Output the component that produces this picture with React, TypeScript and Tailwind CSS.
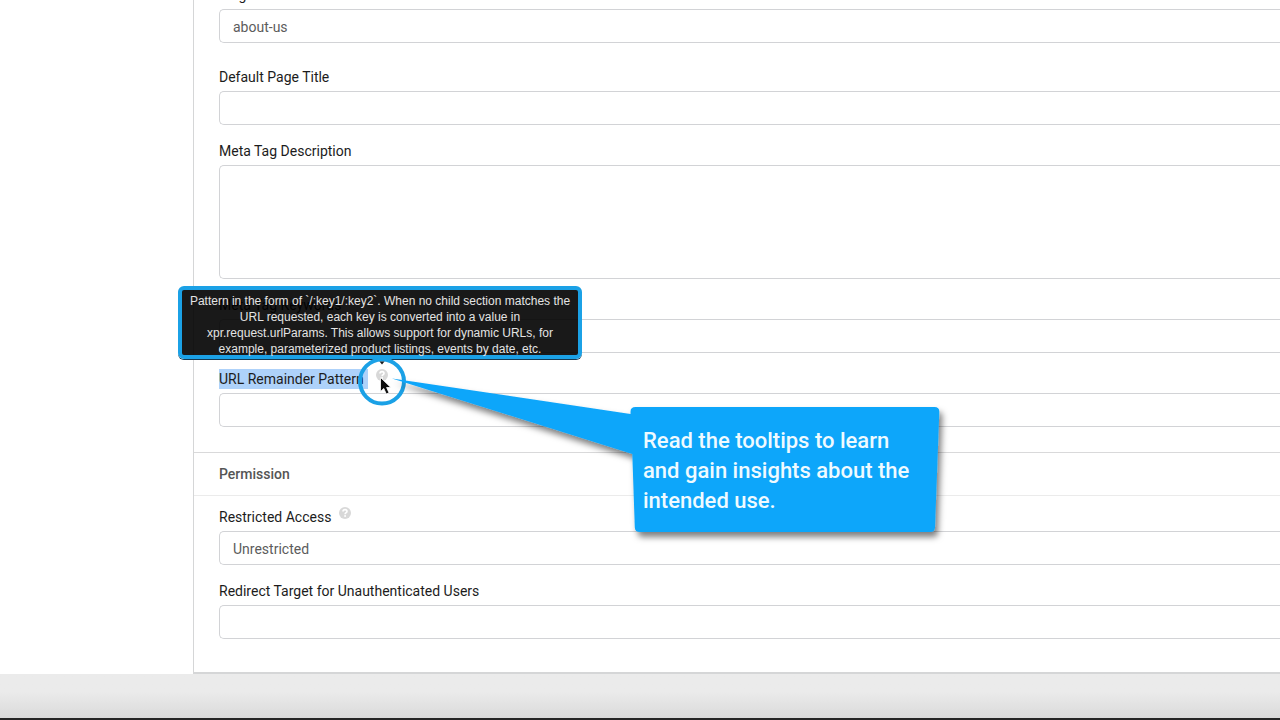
import { ReactNode } from "react";

const INPUT =
  "block w-full appearance-none rounded-l-[5px] border border-r-0 border-[#d2d3d6] bg-white px-[13px] text-sm text-[#5c5c5c] outline-none";

function HelpIcon() {
  return (
    <svg viewBox="0 0 12 12" className="ml-2 size-3" aria-hidden="true">
      <circle cx="6" cy="6" r="6" fill="#d8d8d8" />
      <path
        d="M4 4.6C4 3.3 4.9 2.6 6.05 2.6S8 3.3 8 4.4C8 5.6 6.1 5.6 6.1 7.2"
        fill="none"
        stroke="#fff"
        strokeWidth="1.6"
      />
      <circle cx="6.1" cy="9" r="0.95" fill="#fff" />
    </svg>
  );
}

interface FieldProps {
  id: string;
  label: string;
  help?: boolean;
  selected?: boolean;
  children: ReactNode;
}

function Field({ id, label, help, selected, children }: FieldProps) {
  return (
    <div>
      <div className="mb-1 flex h-5 items-start">
        <label
          htmlFor={id}
          className={`text-sm leading-5 text-[#1c1c1c] ${selected ? "bg-[#aed2fa] pr-1" : ""}`}
        >
          {label}
        </label>
        {help && <HelpIcon />}
      </div>
      {children}
    </div>
  );
}

function Tooltip() {
  return (
    <div
      role="tooltip"
      className="absolute left-[178px] top-[286px] h-[73px] w-[404px] rounded-md border-4 border-[#1ba1e6] bg-black/90 px-1 pt-[3px] text-center font-['Liberation_Sans',Arial,sans-serif] text-xs leading-4 text-[#e4e4e4] shadow-[0_1px_0_#163a52]"
    >
      Pattern in the form of `/:key1/:key2`. When no child section matches the
      <br />
      URL requested, each key is converted into a value in
      <br />
      xpr.request.urlParams. This allows support for dynamic URLs, for
      <br />
      example, parameterized product listings, events by date, etc.
    </div>
  );
}

function Callout() {
  return (
    <>
      {/* bubble, pointer, highlight ring and mouse cursor */}
      <svg
        viewBox="350 350 610 200"
        className="pointer-events-none absolute left-[350px] top-[350px] h-[200px] w-[610px]"
        aria-hidden="true"
      >
        <defs>
          <filter id="bubble-shadow" x="-10%" y="-10%" width="120%" height="130%">
            <feDropShadow dx="3" dy="5" stdDeviation="3" floodColor="#000" floodOpacity="0.5" />
          </filter>
        </defs>
        <circle cx="382" cy="381.5" r="22" fill="none" stroke="#1ba1e6" strokeWidth="4" />
        <path d="M379.5 361.5h5l-2.5 3z" fill="#1a1a1a" />
        <path
          d="M392 378.500L630.500 414V411.500Q630.500 407 635.500 407H934.500Q939.500 407 939.300 412L935 527.500Q934.800 532 930 532H640Q635 532 634.800 527.500L632.300 454Z"
          fill="#11a6fa"
          filter="url(#bubble-shadow)"
        />
        <path
          d="M380.500 377.500V391.500L383.800 388.500L386.300 394L389 392.800L386.600 387.500H390.800Z"
          fill="#0c0c0c"
          stroke="#fff"
          strokeWidth="0.8"
        />
      </svg>
      <p className="absolute left-[643px] top-[426px] w-[290px] text-[22px] font-medium leading-[30px] text-[#effaff]">
        Read the tooltips to learn
        <br />
        and gain insights about the
        <br />
        intended use.
      </p>
    </>
  );
}

export default function App() {
  return (
    <div className="relative h-screen overflow-hidden bg-white font-[Roboto,'Liberation_Sans',sans-serif]">
      <main className="-mt-4 ml-[193px] border-y border-b-2 border-l border-[#d5d6d7]">
        <section className="flex flex-col gap-4 pb-[25px] pl-[25px]">
          <div className="mb-2">
            <Field id="slug" label="Slug">
              <input id="slug" defaultValue="about-us" className={`${INPUT} h-[34px] pt-0.5`} />
            </Field>
          </div>
          <Field id="title" label="Default Page Title">
            <input id="title" className={`${INPUT} h-[34px]`} />
          </Field>
          <Field id="description" label="Meta Tag Description">
            <textarea id="description" className={`${INPUT} h-[114px] resize-none`} />
          </Field>
          <Field id="keywords" label="Meta Tag Keywords">
            <input id="keywords" className={`${INPUT} h-[34px]`} />
          </Field>
          <Field id="pattern" label="URL Remainder Pattern" help selected>
            <input id="pattern" className={`${INPUT} h-[34px]`} />
          </Field>
        </section>

        <h2 className="border-b border-t border-b-[#ebebeb] border-t-[#d9d9da] py-[11px] pl-[25px] text-sm font-medium leading-5 text-[#555]">
          Permission
        </h2>

        <section className="flex flex-col gap-4 pb-[33px] pl-[25px] pt-[11px]">
          <Field id="access" label="Restricted Access" help>
            <select id="access" className={`${INPUT} h-[34px] pt-0.5`}>
              <option>Unrestricted</option>
            </select>
          </Field>
          <Field id="redirect" label="Redirect Target for Unauthenticated Users">
            <input id="redirect" className={`${INPUT} h-[34px]`} />
          </Field>
        </section>
      </main>
      <footer className="h-[46px] border-b-2 border-[#262626] bg-linear-to-b from-[#ebebeb] from-40% to-[#dadada]" />

      <Tooltip />
      <Callout />
    </div>
  );
}
